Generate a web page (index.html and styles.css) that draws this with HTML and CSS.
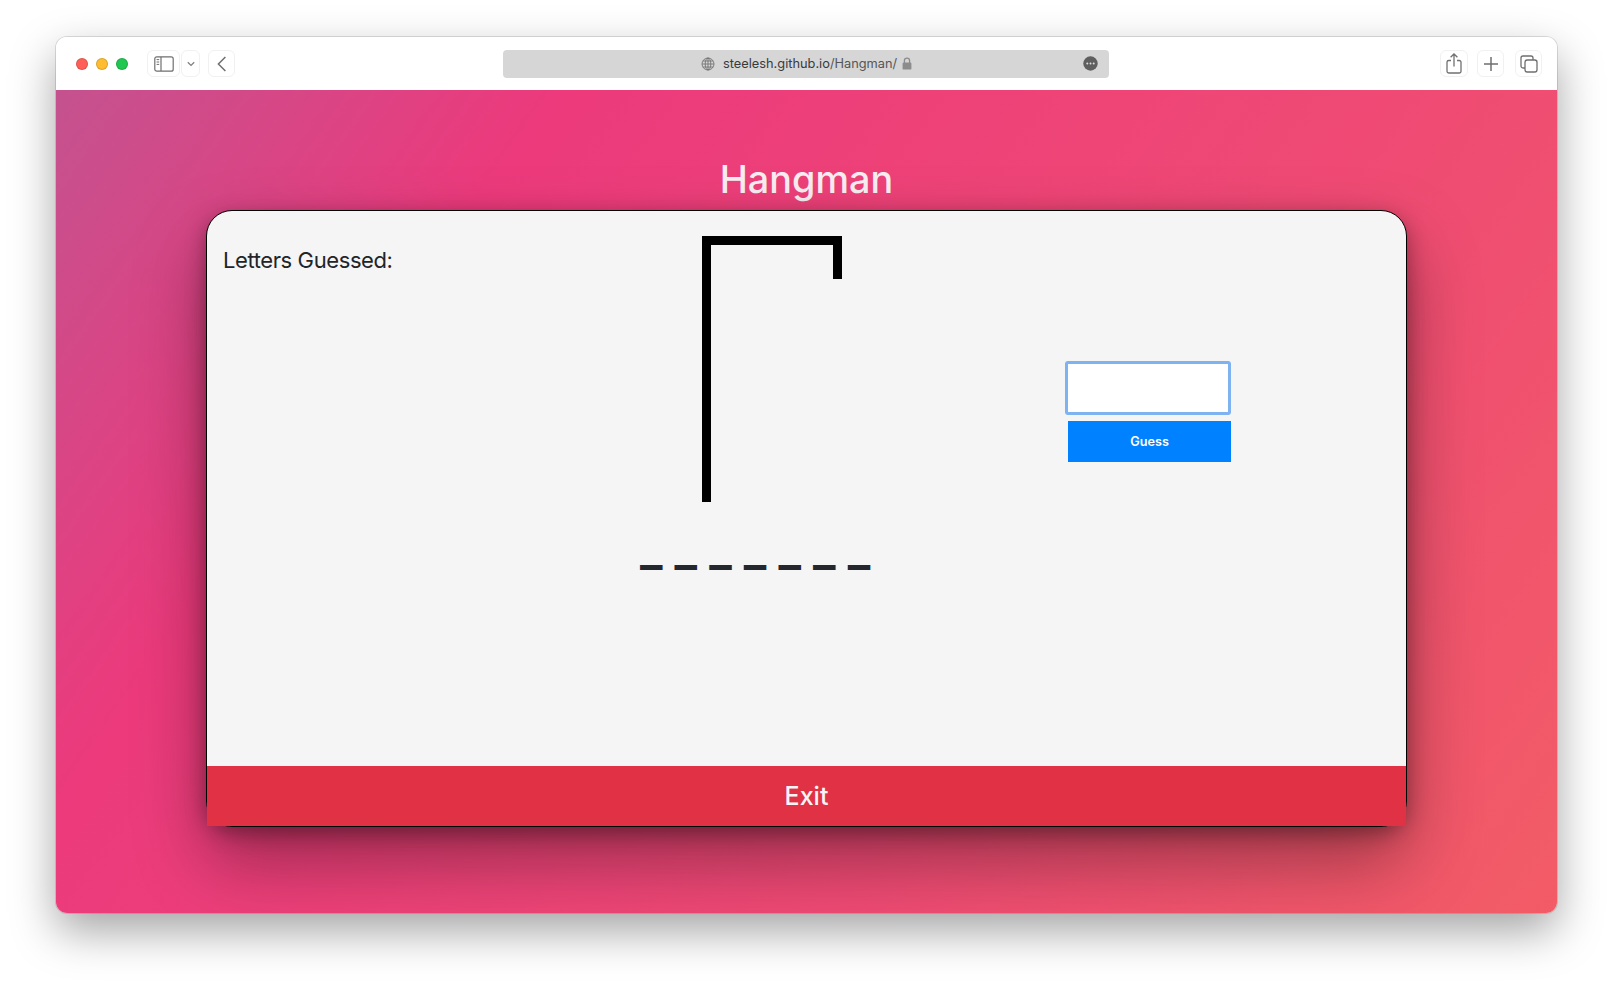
FILE: index.html
```html
<!DOCTYPE html>
<html lang="en">
<head>
<meta charset="utf-8">
<title>Hangman</title>
<link rel="stylesheet" href="styles.css">
</head>
<body>
<div class="window">
  <header class="toolbar">
    <div class="lights">
      <span class="light red"></span><span class="light yellow"></span><span class="light green"></span>
    </div>
    <div class="tool tool-side">
      <svg width="20" height="16" viewBox="0 0 20 16" fill="none" stroke="#6f6f6f" stroke-width="1.2"><rect x="0.8" y="0.8" width="18.4" height="14.4" rx="2"/><path d="M7 1v14"/><path d="M2.6 3.6h2.6M2.6 6h2.6M2.6 8.4h2.6" stroke-width="1"/></svg>
    </div>
    <div class="tool tool-chev">
      <svg width="8" height="6" viewBox="0 0 8 6" fill="none" stroke="#808080" stroke-width="1.3"><path d="M0.8 1.2 4 4.4l3.2-3.2"/></svg>
    </div>
    <div class="tool tool-back">
      <svg width="10" height="16" viewBox="0 0 10 16" fill="none" stroke="#6f6f6f" stroke-width="1.5"><path d="M8.4 1 1.4 8l7 7"/></svg>
    </div>
    <div class="address">
      <svg class="globe" width="14" height="14" viewBox="0 0 14 14" fill="none" stroke="#6a6a6a" stroke-width="0.8"><circle cx="7" cy="7" r="6"/><ellipse cx="7" cy="7" rx="2.8" ry="6"/><path d="M1 7h12M1.9 4h10.2M1.9 10h10.2M7 1v12"/></svg>
      <span class="url">steelesh.github.io<span class="url-path">/Hangman/</span></span>
      <svg class="lock" width="10" height="13" viewBox="0 0 10 13"><path d="M2.4 6V3.8a2.6 2.6 0 0 1 5.2 0V6" fill="none" stroke="#8c8c8c" stroke-width="1.3"/><rect x="0.6" y="5.6" width="8.8" height="7" rx="1.2" fill="#8c8c8c"/></svg>
      <svg class="more" width="15" height="15" viewBox="0 0 15 15"><circle cx="7.5" cy="7.5" r="7.2" fill="#5f5f5f"/><circle cx="4.3" cy="7.5" r="1" fill="#ddd"/><circle cx="7.5" cy="7.5" r="1" fill="#ddd"/><circle cx="10.7" cy="7.5" r="1" fill="#ddd"/></svg>
    </div>
    <div class="tool tool-share">
      <svg width="16" height="21" viewBox="0 0 16 21" fill="none" stroke="#707070" stroke-width="1.3"><path d="M5 7.5H2.8A1.8 1.8 0 0 0 1 9.3v8.9A1.8 1.8 0 0 0 2.8 20h10.4a1.8 1.8 0 0 0 1.8-1.8V9.3a1.8 1.8 0 0 0-1.8-1.8H11"/><path d="M8 13.5V1M4.6 4.2 8 1l3.4 3.2"/></svg>
    </div>
    <div class="tool tool-plus">
      <svg width="14" height="14" viewBox="0 0 14 14" fill="none" stroke="#6f6f6f" stroke-width="1.5"><path d="M7 0v14M0 7h14"/></svg>
    </div>
    <div class="tool tool-tabs">
      <svg width="18" height="18" viewBox="0 0 18 18" fill="none" stroke="#6f6f6f" stroke-width="1.3"><rect x="5" y="5" width="12" height="12" rx="2.2"/><path d="M5 13H3a2 2 0 0 1-2-2V3a2 2 0 0 1 2-2h8a2 2 0 0 1 2 2v2"/></svg>
    </div>
  </header>
  <main class="page">
    <h1 class="title">Hangman</h1>
    <section class="card">
      <div class="game">
        <div class="guessed">Letters Guessed:</div>
        <div class="board">
          <svg class="gallows" width="140" height="266" viewBox="0 0 140 266"><path d="M4.5 266V4.5h131V43" fill="none" stroke="#000" stroke-width="9"/></svg>
          <div class="word">_ _ _ _ _ _ _</div>
        </div>
        <form class="guess">
          <input class="guess-input" type="text" aria-label="Letter">
          <button class="guess-button" type="button">Guess</button>
        </form>
      </div>
      <button class="exit" type="button">Exit</button>
    </section>
  </main>
</div>
</body>
</html>
```

FILE: styles.css
```css
* { box-sizing: border-box; }
html, body { margin: 0; height: 100%; }
body {
  background: #fff;
  padding: 37px 56px 0;
  font-family: Inter, "Liberation Sans", sans-serif;
  overflow: hidden;
}
.window {
  width: 1501px;
  height: 876px;
  border-radius: 11px;
  overflow: hidden;
  box-shadow: 0 0 0 1px rgba(0,0,0,.12), 0 18px 45px rgba(0,0,0,.36);
  display: flex;
  flex-direction: column;
}
.toolbar {
  height: 53px;
  flex: none;
  background: #fff;
  display: flex;
  align-items: center;
  padding-left: 20px;
}
.lights { display: flex; gap: 8px; margin-right: 19px; }
.light { width: 12px; height: 12px; border-radius: 50%; border: 1px solid rgba(0,0,0,.14); }
.red { background: #ff5f57; }
.yellow { background: #febc2e; }
.green { background: #1fc64f; }
.tool {
  height: 27px;
  border: 1px solid #f1f1f1;
  border-radius: 6px;
  display: flex;
  align-items: center;
  justify-content: center;
  flex: none;
}
.tool-side { width: 33px; }
.tool-chev { width: 19px; margin-left: 1px; }
.tool-back { width: 27px; margin-left: 8px; }
.address {
  width: 606px;
  height: 28px;
  margin-left: 268px;
  background: #d6d6d6;
  border-radius: 4px;
  display: flex;
  align-items: center;
  padding-left: 198px;
  font-size: 12.8px;
  color: #3a3a3a;
  flex: none;
}
.globe { margin-right: 8px; }
.url-path { color: #555; }
.lock { margin-left: 5px; }
.more { margin-left: 171px; }
.tool-share { width: 28px; margin-left: 331px; }
.tool-plus { width: 27px; margin-left: 9px; }
.tool-tabs { width: 27px; margin-left: 11px; }
.page {
  flex: 1;
  display: flex;
  flex-direction: column;
  align-items: center;
  background: linear-gradient(125deg, #c4528f 0, #ec3a7c 24%, #ef4a74 65%, #f25c66 100%);
}
.title {
  margin: 0;
  padding-top: 67px;
  height: 120px;
  color: #f8eef2;
  font-size: 37.8px;
  font-weight: 550;
  line-height: 44px;
  text-align: center;
}
.card {
  width: 1201px;
  height: 617px;
  background: #f5f5f5;
  border: 1px solid #000;
  border-radius: 26px;
  box-shadow: 0 6px 20px rgba(0,0,0,.34), 0 34px 70px rgba(0,0,0,.36);
  display: flex;
  flex-direction: column;
}
.game {
  flex: 1;
  display: grid;
  grid-template-columns: 495px 362px 1fr;
  color: #212529;
}
.guessed {
  padding: 36px 0 0 16px;
  font-size: 22px;
  line-height: 26px;
  letter-spacing: -0.4px;
}
.board { padding-top: 25px; }
.gallows { display: block; }
.word {
  margin: 22px 0 0 -62px;
  font-size: 48px;
  line-height: 48px;
  font-weight: 600;
  white-space: pre;
  color: #25272e;
}
.guess { padding: 150px 0 0 1px; display: flex; flex-direction: column; align-items: flex-start; }
.guess-input {
  width: 166px;
  height: 54px;
  background: #fff;
  border: 3px solid #7fb2f0;
  border-radius: 3px;
  outline: none;
}
.guess-button {
  width: 163px;
  height: 41px;
  margin: 6px 0 0 3px;
  background: #0081ff;
  color: #fff;
  border: 0;
  font: 600 12.7px Inter, "Liberation Sans", sans-serif;
}
.exit {
  height: 60px;
  flex: none;
  background: #e03145;
  color: #f8f4f6;
  border: 0;
  font: 500 25px Inter, "Liberation Sans", sans-serif;
}
```
